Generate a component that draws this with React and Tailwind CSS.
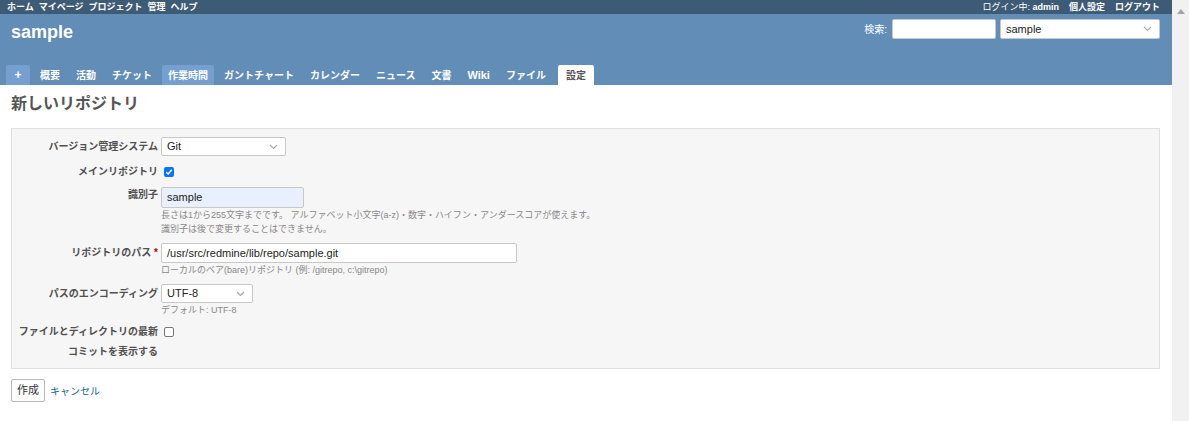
import React from "react";

const F = "font-['Liberation_Sans','Noto_Sans_CJK_JP',sans-serif]";

function Chevron({ className = "" }) {
  return (
    <svg width="9" height="6" viewBox="0 0 9 6" className={className}>
      <polyline points="1,1 4.5,4.5 8,1" fill="none" stroke="#a8a8a8" strokeWidth="1.1" />
    </svg>
  );
}

function SelectBox({ w, h = "h-[19px]", value }) {
  return (
    <div className={`${w} ${h} flex items-center justify-between bg-white border border-[#c8c8c8] rounded-[2px] pl-[5px] pr-[7px] text-[11px] text-[#222]`}>
      <span>{value}</span>
      <Chevron />
    </div>
  );
}

function Checkbox({ checked }) {
  return checked ? (
    <div className="ml-[3px] w-[10px] h-[10px] rounded-[2px] bg-[#0075ff] flex items-center justify-center">
      <svg width="8" height="8" viewBox="0 0 8 8">
        <polyline points="1.3,4.2 3.2,6 6.8,1.8" fill="none" stroke="white" strokeWidth="1.5" />
      </svg>
    </div>
  ) : (
    <div className="ml-[3px] w-[10px] h-[10px] rounded-[2px] bg-white border border-[#767676]" />
  );
}

function Label({ children, className = "" }) {
  return (
    <div className={`w-[146px] shrink-0 text-right font-bold text-[10px] text-[#505050] ${className}`}>
      {children}
    </div>
  );
}

const tabs = ["概要", "活動", "チケット", "作業時間", "ガントチャート", "カレンダー", "ニュース", "文書", "Wiki", "ファイル"];

export default function App() {
  return (
    <div className={`${F} flex w-[1189px] h-[421px] overflow-hidden bg-white`}>
      <div className="w-[1172px] shrink-0 flex flex-col">
        {/* top menu */}
        <div className="h-[14px] bg-[#3e5b76] flex items-center justify-between text-white text-[9px] leading-[14px] px-[7px] pr-[12px]">
          <div className="flex gap-[5px] font-bold">
            <span>ホーム</span>
            <span>マイページ</span>
            <span>プロジェクト</span>
            <span>管理</span>
            <span>ヘルプ</span>
          </div>
          <div className="flex items-center gap-[10px]">
            <span>
              ログイン中: <span className="font-bold">admin</span>
            </span>
            <span className="font-bold">個人設定</span>
            <span className="font-bold">ログアウト</span>
          </div>
        </div>
        {/* header */}
        <div className="h-[71px] bg-[#628db6] flex flex-col">
          <div className="flex justify-between items-start">
            <div className="pl-[11px] pt-[6px] text-[18px] leading-[24px] font-bold text-white">sample</div>
            <div className="flex items-center pt-[5px] pr-[12px] gap-[4px]">
              <span className="text-[10px] text-white mr-[1px]">検索:</span>
              <div className="w-[104px] h-[20px] bg-white border border-[#c8c8c8] rounded-[2px]" />
              <SelectBox w="w-[160px]" h="h-[20px]" value="sample" />
            </div>
          </div>
          <div className="mt-auto flex items-end pl-[6px] gap-[4px] h-[20px]">
            <div className="w-[24px] h-[20px] bg-[#759fcf] text-white font-bold text-[12px] flex items-center justify-center rounded-t-[2px]">+</div>
            {tabs.map((t) => (
              <div
                key={t}
                className={`h-[20px] px-[6px] flex items-center text-[10px] font-bold text-white rounded-t-[2px] ${t === "作業時間" ? "bg-[#759fcf]" : ""} ${t === "Wiki" ? "text-[11px]" : ""}`}
              >
                {t}
              </div>
            ))}
            <div className="h-[20px] px-[8px] flex items-center text-[10px] font-bold text-[#555] bg-white rounded-t-[2px] ml-[2px]">設定</div>
          </div>
        </div>
        {/* content */}
        <div className="pl-[11px] pr-[12px]">
          <h2 className="mt-[9px] text-[16px] leading-[20px] font-bold text-[#555]">新しいリポジトリ</h2>
          <div className="mt-[14px] bg-[#f6f6f6] border border-[#e0e0e0] pt-[8px] pb-[6px] flex flex-col">
            {/* row 1 */}
            <div className="flex items-center h-[19px] gap-[3px]">
              <Label>バージョン管理システム</Label>
              <SelectBox w="w-[125px]" value="Git" />
            </div>
            {/* row 2 */}
            <div className="flex items-center h-[19px] gap-[3px] mt-[6px]">
              <Label>メインリポジトリ</Label>
              <Checkbox checked />
            </div>
            {/* row 3 */}
            <div className="flex items-start gap-[3px] mt-[6px]">
              <Label className="leading-[16px]">識別子</Label>
              <div className="flex flex-col">
                <div className="w-[143px] h-[21px] bg-[#e8f0fe] border border-[#c8c8c8] rounded-[2px] pl-[5px] flex items-center text-[11px] text-[#222]">sample</div>
                <div className="text-[9px] leading-[14px] text-[#888]">
                  長さは1から255文字までです。 アルファベット小文字(a-z)・数字・ハイフン・アンダースコアが使えます。
                </div>
                <div className="text-[9px] leading-[14px] text-[#888]">識別子は後で変更することはできません。</div>
              </div>
            </div>
            {/* row 4 */}
            <div className="flex items-start gap-[3px] mt-[7px]">
              <Label className="leading-[19px]">
                リポジトリのパス <span className="text-[#bb0000]">*</span>
              </Label>
              <div className="flex flex-col">
                <div className="w-[356px] h-[20px] bg-white border border-[#c8c8c8] rounded-[2px] pl-[5px] flex items-center text-[11px] text-[#222]">
                  /usr/src/redmine/lib/repo/sample.git
                </div>
                <div className="text-[9px] leading-[14px] text-[#888]">ローカルのベア(bare)リポジトリ (例: /gitrepo, c:\gitrepo)</div>
              </div>
            </div>
            {/* row 5 */}
            <div className="flex items-start gap-[3px] mt-[7px]">
              <Label className="leading-[19px]">パスのエンコーディング</Label>
              <div className="flex flex-col">
                <SelectBox w="w-[92px]" value="UTF-8" />
                <div className="text-[9px] leading-[14px] text-[#888]">デフォルト: UTF-8</div>
              </div>
            </div>
            {/* row 6 */}
            <div className="flex items-start gap-[3px] mt-[5px]">
              <Label className="leading-[20px]">
                ファイルとディレクトリの最新
                <br />
                コミットを表示する
              </Label>
              <div className="h-[20px] flex items-center">
                <Checkbox />
              </div>
            </div>
          </div>
          <div className="mt-[10px] flex items-center gap-[5px]">
            <div className="w-[34px] h-[23px] border border-[#b8b8b8] rounded-[2px] bg-[#fdfdfd] flex items-center justify-center text-[11px] text-[#333]">作成</div>
            <span className="text-[10px] text-[#169] mt-[1px]">キャンセル</span>
          </div>
        </div>
      </div>
      {/* scrollbar */}
      <div className="w-[17px] shrink-0 bg-[#f1f1f1] flex justify-center pt-[9px]">
        <svg width="8" height="5" viewBox="0 0 8 5">
          <polygon points="0,5 4,0 8,5" fill="#a3a3a3" />
        </svg>
      </div>
    </div>
  );
}
